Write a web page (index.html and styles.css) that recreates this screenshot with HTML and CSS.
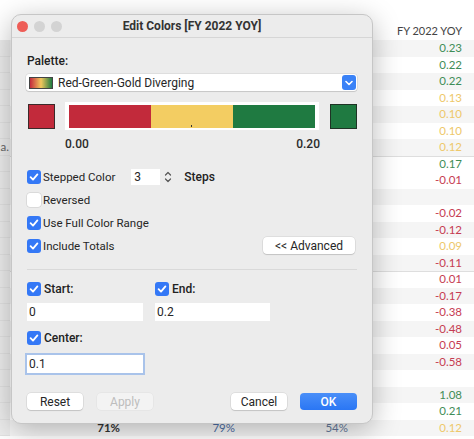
FILE: index.html
```html
<!DOCTYPE html>
<html lang="en">
  <head>
    <meta charset="UTF-8" />
    <title>Edit Colors</title>
    <link rel="stylesheet" href="styles.css">
  </head>
  <body>
    <div class="sheet">
      <div class="row head">
        <div class="stub"></div><div class="cell"></div><div class="cell"></div><div class="cell"></div>
        <div class="cell yoy">FY 2022 YOY</div>
      </div>
      <div class="row alt"><div class="stub"></div><div class="cell"></div><div class="cell"></div><div class="cell"></div><div class="cell yoy green">0.23</div></div>
      <div class="row"><div class="stub"></div><div class="cell"></div><div class="cell"></div><div class="cell"></div><div class="cell yoy green">0.22</div></div>
      <div class="row alt"><div class="stub"></div><div class="cell"></div><div class="cell"></div><div class="cell"></div><div class="cell yoy green">0.22</div></div>
      <div class="row"><div class="stub"></div><div class="cell"></div><div class="cell"></div><div class="cell"></div><div class="cell yoy gold">0.13</div></div>
      <div class="row alt"><div class="stub"></div><div class="cell"></div><div class="cell"></div><div class="cell"></div><div class="cell yoy gold">0.10</div></div>
      <div class="row"><div class="stub"></div><div class="cell"></div><div class="cell"></div><div class="cell"></div><div class="cell yoy gold">0.10</div></div>
      <div class="row alt"><div class="stub"><span>a.</span></div><div class="cell"></div><div class="cell"></div><div class="cell"></div><div class="cell yoy gold">0.12</div></div>
      <div class="row line"><div class="stub"></div><div class="cell"></div><div class="cell"></div><div class="cell"></div><div class="cell yoy green">0.17</div></div>
      <div class="row"><div class="stub"></div><div class="cell"></div><div class="cell"></div><div class="cell"></div><div class="cell yoy red">-0.01</div></div>
      <div class="row alt"><div class="stub"></div><div class="cell"></div><div class="cell"></div><div class="cell"></div><div class="cell yoy"></div></div>
      <div class="row"><div class="stub"></div><div class="cell"></div><div class="cell"></div><div class="cell"></div><div class="cell yoy red">-0.02</div></div>
      <div class="row alt"><div class="stub"></div><div class="cell"></div><div class="cell"></div><div class="cell"></div><div class="cell yoy red">-0.12</div></div>
      <div class="row"><div class="stub"></div><div class="cell"></div><div class="cell"></div><div class="cell"></div><div class="cell yoy gold">0.09</div></div>
      <div class="row alt"><div class="stub"></div><div class="cell"></div><div class="cell"></div><div class="cell"></div><div class="cell yoy red">-0.11</div></div>
      <div class="row line"><div class="stub"></div><div class="cell"></div><div class="cell"></div><div class="cell"></div><div class="cell yoy red">0.01</div></div>
      <div class="row alt"><div class="stub"></div><div class="cell"></div><div class="cell"></div><div class="cell"></div><div class="cell yoy red">-0.17</div></div>
      <div class="row"><div class="stub"></div><div class="cell"></div><div class="cell"></div><div class="cell"></div><div class="cell yoy red">-0.38</div></div>
      <div class="row alt"><div class="stub"></div><div class="cell"></div><div class="cell"></div><div class="cell"></div><div class="cell yoy red">-0.48</div></div>
      <div class="row"><div class="stub"></div><div class="cell"></div><div class="cell"></div><div class="cell"></div><div class="cell yoy red">0.05</div></div>
      <div class="row alt"><div class="stub"></div><div class="cell"></div><div class="cell"></div><div class="cell"></div><div class="cell yoy red">-0.58</div></div>
      <div class="row"><div class="stub"></div><div class="cell"></div><div class="cell"></div><div class="cell"></div><div class="cell yoy"></div></div>
      <div class="row alt"><div class="stub"></div><div class="cell"></div><div class="cell"></div><div class="cell"></div><div class="cell yoy green">1.08</div></div>
      <div class="row"><div class="stub"></div><div class="cell"></div><div class="cell"></div><div class="cell"></div><div class="cell yoy green">0.21</div></div>
      <div class="row alt total">
        <div class="stub"></div>
        <div class="cell dark">71%</div>
        <div class="cell blue">79%</div>
        <div class="cell slate">54%</div>
        <div class="cell yoy gold">0.12</div>
      </div>
    </div>

    <!-- dialog -->
    <div class="dialog">
      <div class="titlebar">
        <span class="light close"></span>
        <span class="light"></span>
        <span class="light"></span>
        <div class="title">Edit Colors [FY 2022 YOY]</div>
      </div>

      <div class="content">
        <div class="label strong">Palette:</div>
        <div class="select">
          <span class="grad"></span>
          <span class="select-text">Red-Green-Gold Diverging</span>
          <span class="select-btn">
            <svg width="8" height="6" viewBox="0 0 8 6"><path d="M1 1.5 L4 4.5 L7 1.5" fill="none" stroke="#fff" stroke-width="1.6" stroke-linecap="round" stroke-linejoin="round"/></svg>
          </span>
        </div>

        <div class="colors">
          <span class="swatch red-fill"></span>
          <div class="bar">
            <span class="seg red-fill"></span>
            <span class="seg gold-fill"><i class="tick"></i></span>
            <span class="seg green-fill"></span>
          </div>
          <span class="swatch green-fill"></span>
        </div>
        <div class="range">
          <span>0.00</span>
          <span>0.20</span>
        </div>

        <div class="check-row">
          <span class="box on"><svg width="14" height="14" viewBox="0 0 14 14"><path d="M3.6 7.2 L6 9.6 L10.4 4.4" fill="none" stroke="#fff" stroke-width="1.8" stroke-linecap="round" stroke-linejoin="round"/></svg></span>
          <span class="check-text">Stepped Color</span>
          <span class="steps-input">3</span>
          <span class="stepper">
            <svg width="10" height="16" viewBox="0 0 10 16"><path d="M2.5 6 L5 3.5 L7.5 6 M2.5 10 L5 12.5 L7.5 10" fill="none" stroke="#555" stroke-width="1.2" stroke-linecap="round" stroke-linejoin="round"/></svg>
          </span>
          <span class="strong steps">Steps</span>
        </div>
        <div class="check-row">
          <span class="box"></span>
          <span class="check-text">Reversed</span>
        </div>
        <div class="check-row">
          <span class="box on"><svg width="14" height="14" viewBox="0 0 14 14"><path d="M3.6 7.2 L6 9.6 L10.4 4.4" fill="none" stroke="#fff" stroke-width="1.8" stroke-linecap="round" stroke-linejoin="round"/></svg></span>
          <span class="check-text">Use Full Color Range</span>
        </div>
        <div class="check-row">
          <span class="box on"><svg width="14" height="14" viewBox="0 0 14 14"><path d="M3.6 7.2 L6 9.6 L10.4 4.4" fill="none" stroke="#fff" stroke-width="1.8" stroke-linecap="round" stroke-linejoin="round"/></svg></span>
          <span class="check-text">Include Totals</span>
          <button class="btn advanced">&lt;&lt; Advanced</button>
        </div>

        <div class="sep"></div>

        <div class="fields">
          <div class="field-label">
            <span class="box on"><svg width="14" height="14" viewBox="0 0 14 14"><path d="M3.6 7.2 L6 9.6 L10.4 4.4" fill="none" stroke="#fff" stroke-width="1.8" stroke-linecap="round" stroke-linejoin="round"/></svg></span>
            <span class="strong">Start:</span>
          </div>
          <div class="field-label">
            <span class="box on"><svg width="14" height="14" viewBox="0 0 14 14"><path d="M3.6 7.2 L6 9.6 L10.4 4.4" fill="none" stroke="#fff" stroke-width="1.8" stroke-linecap="round" stroke-linejoin="round"/></svg></span>
            <span class="strong">End:</span>
          </div>
          <div class="input">0</div>
          <div class="input">0.2</div>
          <div class="field-label center-label">
            <span class="box on"><svg width="14" height="14" viewBox="0 0 14 14"><path d="M3.6 7.2 L6 9.6 L10.4 4.4" fill="none" stroke="#fff" stroke-width="1.8" stroke-linecap="round" stroke-linejoin="round"/></svg></span>
            <span class="strong">Center:</span>
          </div>
          <div></div>
          <div class="input focus">0.1</div>
        </div>

        <div class="buttons">
          <button class="btn">Reset</button>
          <button class="btn disabled">Apply</button>
          <span class="spacer"></span>
          <button class="btn">Cancel</button>
          <button class="btn primary">OK</button>
        </div>
      </div>
    </div>
  </body>
</html>
```

FILE: styles.css
```css
body {
  margin: 0;
  background: #fff;
  font-family: Lato, "Open Sans", sans-serif;
  overflow: hidden;
}

/* tabla de fondo */
.sheet {
  padding-top: 23px;
}

.row {
  display: grid;
  grid-template-columns: 10px 120px 115px 113px 116px;
  height: 16.5px;
  font-size: 11.5px;
  line-height: 16.5px;
}

.row.alt {
  background: #f5f5f5;
}

.row.line {
  box-shadow: inset 0 1px 0 #dedede;
}

.row.head {
  height: 17px;
  color: #444;
  font-size: 11px;
}

.stub {
  background: #ececec;
  border-bottom: 1px solid #e2e2e2;
  box-sizing: border-box;
  display: flex;
  justify-content: flex-end;
  overflow: hidden;
  color: #666;
  white-space: nowrap;
  font-size: 11.5px;
  padding-right: 1px;
}

.row.head .stub {
  background: #fff;
  border: none;
}

.cell {
  text-align: right;
  padding-right: 10px;
}

.cell.yoy {
  padding-right: 12px;
}

.green { color: #3f8d57; }
.gold { color: #eec86a; }
.red { color: #c63c52; }
.dark { color: #333; font-weight: 700; }
.blue { color: #4d6ea5; }
.slate { color: #647a9b; }

/* dialogo */
.dialog {
  position: absolute;
  left: 11px;
  top: 14px;
  width: 362px;
  height: 410px;
  box-sizing: border-box;
  background: #ececec;
  border: 1px solid #c6c6c6;
  border-radius: 10px;
  box-shadow: 0 6px 28px rgba(0, 0, 0, 0.28);
  font-family: Roboto, "Noto Sans", sans-serif;
  font-size: 12px;
  color: #262626;
}

.titlebar {
  height: 22px;
  border-bottom: 1px solid #d6d6d6;
  display: flex;
  align-items: center;
  gap: 6px;
  padding-left: 5px;
  position: relative;
}

.light {
  width: 11px;
  height: 11px;
  border-radius: 50%;
  background: #d3d3d3;
}

.light.close {
  background: #ee5d57;
}

.title {
  position: absolute;
  left: 0;
  right: 0;
  text-align: center;
  font-weight: 700;
  font-size: 12px;
  color: #333;
}

.content {
  padding: 0 15px;
}

.strong {
  font-weight: 500;
  color: #222;
}

.label {
  margin-top: 15px;
  line-height: 16px;
}

.select {
  margin-top: 5px;
  margin-left: -1px;
  height: 17px;
  background: #fff;
  border-radius: 3px;
  box-shadow: 0 0 0 0.5px rgba(0, 0, 0, 0.12), 0 1px 1px rgba(0, 0, 0, 0.1);
  display: flex;
  align-items: center;
  padding-left: 3px;
}

.grad {
  width: 22px;
  height: 10px;
  border: 1px solid #444;
  background: linear-gradient(to right, #c42a3c, #f2c75c 50%, #1f7a40);
}

.select-text {
  margin-left: 5px;
  flex: 1;
}

.select-btn {
  width: 14px;
  height: 15px;
  margin-right: 1px;
  border-radius: 3px;
  background: #3a82f7;
  display: flex;
  align-items: center;
  justify-content: center;
}

.colors {
  margin-top: 11px;
  height: 28px;
  display: flex;
  align-items: center;
}

.swatch {
  width: 25px;
  height: 23px;
  border: 1px solid #3b2a2a;
  margin-left: 1px;
}

.red-fill { background: #c22a3b; }
.gold-fill { background: #f3cd62; }
.green-fill { background: #1f7a41; }

.colors .swatch:last-child {
  margin-left: 11px;
  border-color: #1f3325;
}

.bar {
  margin-left: 10px;
  width: 255px;
  height: 28px;
  box-sizing: border-box;
  background: #fff;
  padding: 3px 4px 2px;
  display: flex;
}

.seg {
  flex: 1;
  position: relative;
}

.tick {
  position: absolute;
  left: 40px;
  bottom: 1px;
  width: 1px;
  height: 2px;
  background: #333;
}

.range {
  margin-top: 6px;
  display: flex;
  justify-content: space-between;
  padding: 0 37px 0 38px;
  line-height: 16px;
  font-weight: 500;
  color: #2a2a2a;
}

.check-row {
  height: 23px;
  display: flex;
  align-items: center;
}

.range + .check-row {
  margin-top: 13px;
}

.box {
  width: 14px;
  height: 14px;
  box-sizing: border-box;
  border-radius: 3px;
  background: #fff;
  box-shadow: 0 0 0 0.5px rgba(0, 0, 0, 0.15);
  flex: none;
  display: flex;
}

.box.on {
  background: #3478f6;
  box-shadow: none;
}

.check-text {
  margin-left: 2px;
  font-size: 11.5px;
}

.steps-input {
  margin-left: 16px;
  width: 29px;
  height: 16px;
  box-sizing: border-box;
  background: #fff;
  padding-left: 3px;
  line-height: 16px;
}

.stepper {
  margin-left: 3px;
  width: 10px;
  height: 16px;
  display: flex;
}

.steps {
  margin-left: 11px;
}

.btn {
  font: inherit;
  color: #262626;
  background: #fff;
  border: none;
  border-radius: 4px;
  height: 17px;
  padding: 0;
  box-shadow: 0 0 0 0.5px rgba(0, 0, 0, 0.12), 0 1px 1px rgba(0, 0, 0, 0.12);
}

.advanced {
  margin-left: auto;
  margin-right: 2px;
  width: 92px;
}

.sep {
  margin-top: 12px;
  height: 1px;
  background: #d9d9d9;
}

.fields {
  margin-top: 11px;
  display: grid;
  grid-template-columns: 116px 115px;
  column-gap: 12px;
}

.field-label {
  display: flex;
  align-items: center;
  gap: 3px;
  height: 16px;
}

.input {
  margin-top: 6px;
  height: 18px;
  line-height: 18px;
  background: #fff;
  padding-left: 2px;
}

.center-label {
  margin-top: 9px;
}

.input.focus {
  margin-top: 9px;
  box-shadow: 0 0 0 2px #a9c3ea;
}

.buttons {
  margin-top: 20px;
  display: flex;
  gap: 14px;
}

.buttons .btn {
  width: 56px;
}

.spacer {
  flex: 1;
}

.btn.disabled {
  background: #f3f3f3;
  color: #bdbdbd;
  box-shadow: 0 0 0 0.5px rgba(0, 0, 0, 0.05);
}

.btn.primary {
  width: 57px;
  margin-left: -1px;
  background: linear-gradient(#4a8ff8, #2a76f4);
  color: #fff;
  font-weight: 500;
  box-shadow: none;
}
```
